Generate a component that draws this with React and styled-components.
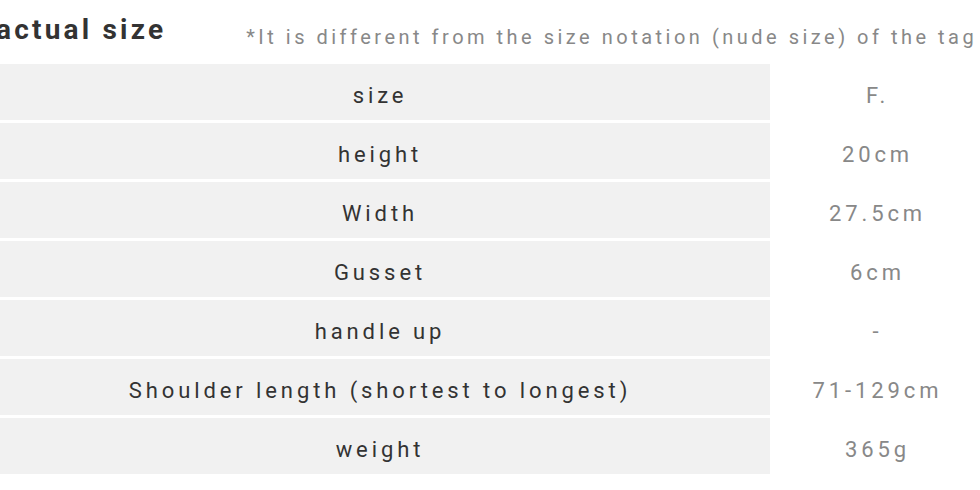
import React from "react";
import styled, { createGlobalStyle } from "styled-components";

const Global = createGlobalStyle`
  html, body { margin: 0; padding: 0; background: #fff; }
  body { font-family: Roboto, "Noto Sans", Arial, sans-serif; overflow: hidden; }
`;

const Page = styled.div`
  width: 995px;
  margin-left: -10px;
`;

const Header = styled.div`
  display: flex;
  align-items: flex-start;
  height: 64px;
  padding-left: 6px;
`;

const Title = styled.h2`
  margin: 0;
  padding-top: 15px;
  font-size: 28px;
  font-weight: 700;
  letter-spacing: 3.2px;
  color: #333;
  line-height: 30px;
  white-space: nowrap;
`;

const Note = styled.span`
  margin-left: 80px;
  padding-top: 25px;
  font-size: 20px;
  line-height: 24px;
  letter-spacing: 3.5px;
  color: #888;
  white-space: nowrap;
`;

const Table = styled.div`
  display: grid;
  grid-template-columns: 780px 215px;
  row-gap: 3px;
`;

const Cell = styled.div`
  height: 56px;
  padding-top: 7px;
  box-sizing: border-box;
  display: flex;
  align-items: center;
  justify-content: center;
  font-size: 22px;
  letter-spacing: 3.9px;
  color: ${(p) => (p.$label ? "#333" : "#888")};
  background: ${(p) => (p.$label ? "#f1f1f1" : "#fff")};
`;

const rows = [
  ["size", "F."],
  ["height", "20cm"],
  ["Width", "27.5cm"],
  ["Gusset", "6cm"],
  ["handle up", "-"],
  ["Shoulder length (shortest to longest)", "71-129cm"],
  ["weight", "365g"],
];

export default function App() {
  return (
    <Page>
      <Global />
      <Header>
        <Title>actual size</Title>
        <Note>*It is different from the size notation (nude size) of the tag</Note>
      </Header>
      <Table>
        {rows.map(([k, v]) => (
          <React.Fragment key={k}>
            <Cell $label>{k}</Cell>
            <Cell>{v}</Cell>
          </React.Fragment>
        ))}
      </Table>
    </Page>
  );
}
